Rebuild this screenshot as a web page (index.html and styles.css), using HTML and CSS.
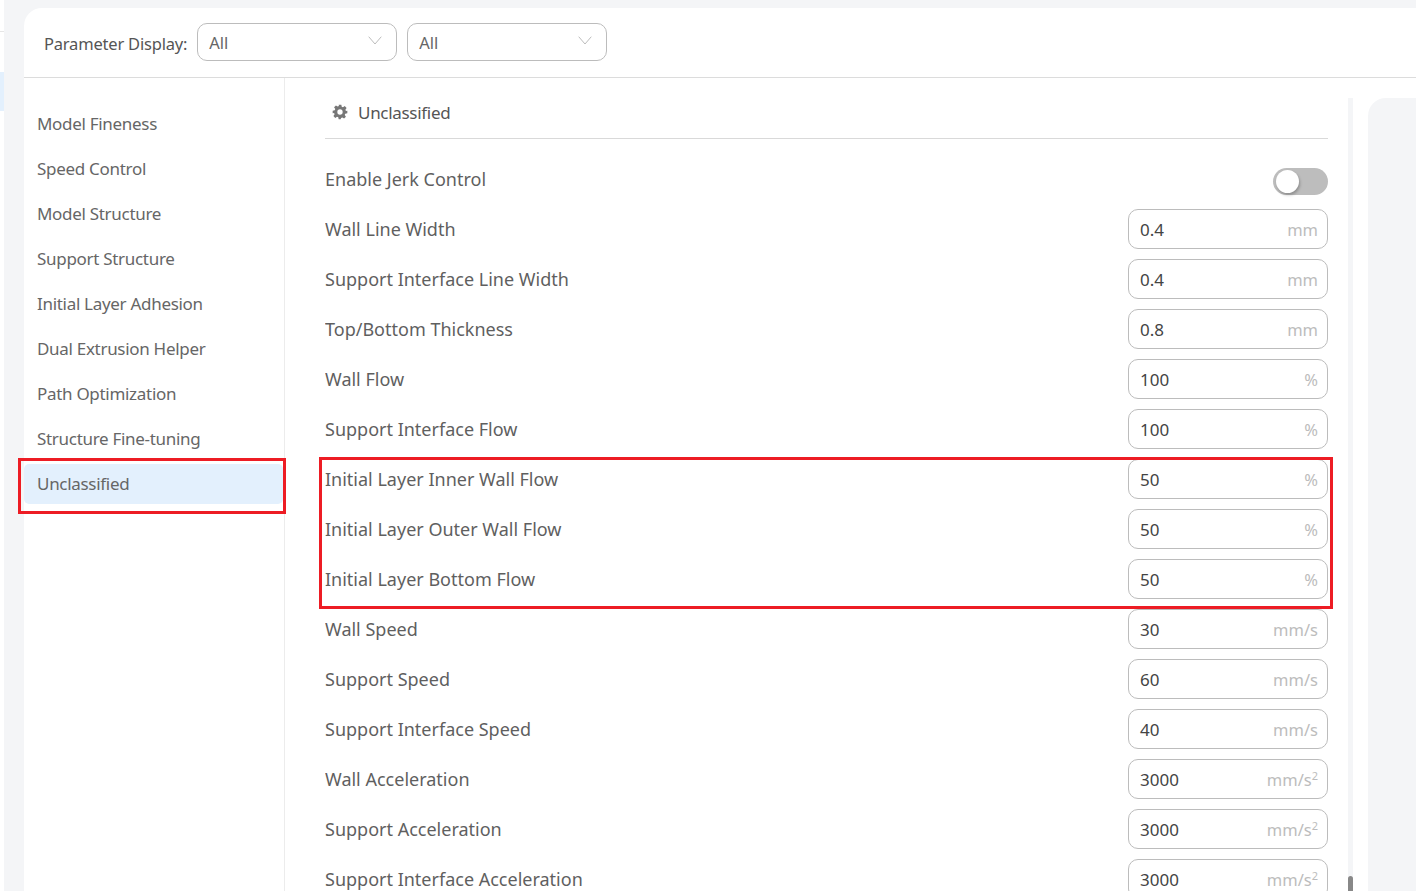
FILE: index.html
```html
<!DOCTYPE html>
<html lang="en">
<head>
<meta charset="utf-8">
<title>Parameter Settings</title>
<link rel="stylesheet" href="styles.css">
</head>
<body>
<div class="page">
  <div class="rail"><div class="rail-line"></div><div class="rail-active"></div></div>
  <main class="panel">
    <header class="toolbar">
      <span class="toolbar-label">Parameter Display:</span>
      <div class="select"><span>All</span><svg class="chev" viewBox="0 0 14 9"><path d="M.7.7 7 8 13.3.7"/></svg></div>
      <div class="select"><span>All</span><svg class="chev" viewBox="0 0 14 9"><path d="M.7.7 7 8 13.3.7"/></svg></div>
    </header>
    <div class="body">
      <nav class="nav">
        <div class="nav-item">Model Fineness</div>
        <div class="nav-item">Speed Control</div>
        <div class="nav-item">Model Structure</div>
        <div class="nav-item">Support Structure</div>
        <div class="nav-item">Initial Layer Adhesion</div>
        <div class="nav-item">Dual Extrusion Helper</div>
        <div class="nav-item">Path Optimization</div>
        <div class="nav-item">Structure Fine-tuning</div>
        <div class="nav-item active">Unclassified</div>
      </nav>
      <section class="content">
        <div class="title">
          <svg class="gear" viewBox="0 0 24 24"><path fill-rule="evenodd" d="M10 1h4l.6 3.1 1.9.8 2.6-1.8 2.8 2.8-1.8 2.6.8 1.9L23 10v4l-3.1.6-.8 1.9 1.8 2.6-2.8 2.8-2.6-1.8-1.9.8L13 23h-3l-.6-3.1-1.9-.8-2.6 1.8-2.8-2.8 1.8-2.6-.8-1.9L1 14v-4l3.1-.6.8-1.9-1.8-2.6 2.8-2.8 2.6 1.8 1.9-.8zM12 8a4 4 0 1 0 0 8 4 4 0 0 0 0-8z"/></svg>
          <span>Unclassified</span>
        </div>
        <div class="rows">
          <div class="row"><span>Enable Jerk Control</span><div class="toggle"><div class="knob"></div></div></div>
          <div class="row"><span>Wall Line Width</span><div class="field"><span class="val">0.4</span><span class="unit">mm</span></div></div>
          <div class="row"><span>Support Interface Line Width</span><div class="field"><span class="val">0.4</span><span class="unit">mm</span></div></div>
          <div class="row"><span>Top/Bottom Thickness</span><div class="field"><span class="val">0.8</span><span class="unit">mm</span></div></div>
          <div class="row"><span>Wall Flow</span><div class="field"><span class="val">100</span><span class="unit">%</span></div></div>
          <div class="row"><span>Support Interface Flow</span><div class="field"><span class="val">100</span><span class="unit">%</span></div></div>
          <div class="row"><span>Initial Layer Inner Wall Flow</span><div class="field"><span class="val">50</span><span class="unit">%</span></div></div>
          <div class="row"><span>Initial Layer Outer Wall Flow</span><div class="field"><span class="val">50</span><span class="unit">%</span></div></div>
          <div class="row"><span>Initial Layer Bottom Flow</span><div class="field"><span class="val">50</span><span class="unit">%</span></div></div>
          <div class="row"><span>Wall Speed</span><div class="field"><span class="val">30</span><span class="unit">mm/s</span></div></div>
          <div class="row"><span>Support Speed</span><div class="field"><span class="val">60</span><span class="unit">mm/s</span></div></div>
          <div class="row"><span>Support Interface Speed</span><div class="field"><span class="val">40</span><span class="unit">mm/s</span></div></div>
          <div class="row"><span>Wall Acceleration</span><div class="field"><span class="val">3000</span><span class="unit">mm/s<sup>2</sup></span></div></div>
          <div class="row"><span>Support Acceleration</span><div class="field"><span class="val">3000</span><span class="unit">mm/s<sup>2</sup></span></div></div>
          <div class="row"><span>Support Interface Acceleration</span><div class="field"><span class="val">3000</span><span class="unit">mm/s<sup>2</sup></span></div></div>
        </div>
      </section>
      <div class="scroll"><div class="thumb"></div></div>
      <aside class="preview"></aside>
    </div>
  </main>
</div>
<div class="mark mark-nav"></div>
<div class="mark mark-rows"></div>
</body>
</html>
```

FILE: styles.css
```css
* { box-sizing: border-box; }
html, body { margin: 0; height: 100%; overflow: hidden; }
body {
  background: #f4f5f7;
  color: #5f5f5f;
  font-family: "Noto Sans", "Open Sans", sans-serif;
  font-size: 18px;
  position: relative;
}
.page { display: flex; height: 891px; }
.rail { width: 4px; background: #fff; flex: none; padding-top: 31px; }
.rail-line { height: 1px; background: #e6e6e6; }
.rail-active { height: 39px; margin-top: 40px; background: #e3f0fd; }
.panel {
  flex: 1;
  min-width: 0;
  margin: 8px 0 0 20px;
  background: #fff;
  border-radius: 18px 0 0 0;
  display: flex;
  flex-direction: column;
  overflow: hidden;
}
.toolbar {
  flex: none;
  height: 70px;
  padding: 15px 0 0 20px;
  border-bottom: 1px solid #dcdcdc;
  display: flex;
  align-items: flex-start;
  gap: 10px;
}
.toolbar-label { line-height: 41px; font-size: 16.5px; letter-spacing: -.2px; color: #555; }
.select {
  width: 200px;
  height: 38px;
  border: 1px solid #bcbcbc;
  border-radius: 10px;
  padding: 0 14px 0 11px;
  display: flex;
  align-items: center;
  justify-content: space-between;
  font-size: 16.5px;
  color: #666;
}
.chev { width: 14px; height: 9px; margin-top: -4px; fill: none; stroke: #bcbcbc; stroke-width: 1; }
.body { flex: 1; min-height: 0; display: flex; }
.nav {
  width: 261px;
  flex: none;
  border-right: 1px solid #ececec;
  padding-top: 26px;
  display: flex;
  flex-direction: column;
  gap: 5px;
}
.nav-item {
  height: 40px;
  line-height: 39px;
  padding-left: 13px;
  margin-right: 1px;
  border-radius: 5px;
  font-size: 17px;
  letter-spacing: -.3px;
  color: #666;
}
.nav-item.active { background: #e3f0fd; }
.content { width: 1003px; flex: none; margin-left: 40px; overflow: hidden; }
.title {
  height: 61px;
  border-bottom: 1px solid #d9d9d9;
  padding: 8px 0 0 7px;
  display: flex;
  align-items: center;
  gap: 10px;
  font-size: 17px;
  letter-spacing: -.3px;
  color: #555;
}
.gear { width: 16px; height: 16px; fill: #777; }
.rows { padding-top: 15px; }
.row {
  height: 50px;
  display: flex;
  align-items: center;
  justify-content: space-between;
  font-size: 18px;
  color: #5f5f5f;
}
.toggle {
  width: 55px;
  height: 27px;
  margin-top: 5px;
  border-radius: 14px;
  background: #bdbdbd;
  padding: 2px 3px;
}
.knob {
  width: 23px;
  height: 23px;
  border-radius: 50%;
  background: #fff;
  box-shadow: 1px 2px 3px rgba(0, 0, 0, .25);
}
.field {
  width: 200px;
  height: 40px;
  flex: none;
  border: 1px solid #bcbcbc;
  border-radius: 10px;
  padding: 0 9px 0 11px;
  display: flex;
  align-items: center;
  justify-content: space-between;
  font-size: 17px;
}
.val { color: #444; }
.unit { color: #bcbcbc; font-size: 16.5px; }
.unit sup { font-size: 11px; line-height: 0; vertical-align: 6px; }
.scroll {
  width: 5px;
  flex: none;
  margin: 20px 0 0 20px;
  background: #f4f5f7;
  display: flex;
  flex-direction: column;
  justify-content: flex-end;
}
.thumb { height: 15px; background: #888; border-radius: 3px 3px 0 0; }
.preview {
  flex: 1;
  margin: 20px 0 0 15px;
  background: #f4f5f7;
  border-radius: 18px 0 0 0;
}
.mark { position: absolute; border: 3px solid #ed1c24; pointer-events: none; }
.mark-nav { left: 18px; top: 458px; width: 268px; height: 56px; }
.mark-rows { left: 319px; top: 457px; width: 1014px; height: 152px; }
```
